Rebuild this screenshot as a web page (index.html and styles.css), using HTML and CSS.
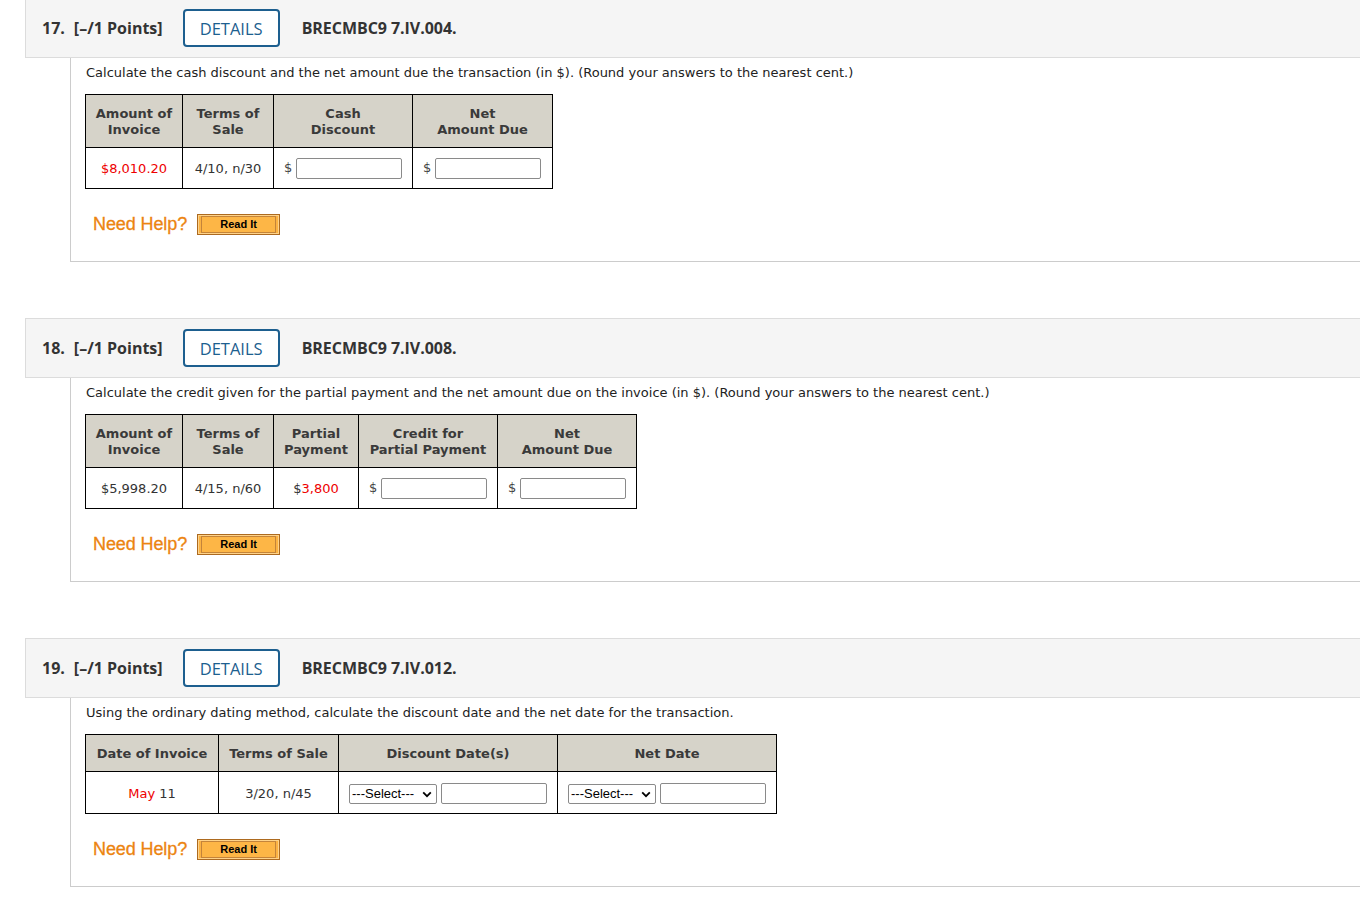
FILE: index.html
```html
<!DOCTYPE html>
<html lang="en">
<head>
<meta charset="utf-8">
<title>Questions</title>
<link rel="stylesheet" href="styles.css">
</head>
<body>
<div class="page">

  <div class="question">
    <div class="q-head">
      <span class="q-num">17.</span>
      <span class="q-pts">[–/1 Points]</span>
      <button class="details">DETAILS</button>
      <span class="q-code">BRECMBC9 7.IV.004.</span>
    </div>
    <div class="q-body">
      <p class="prompt">Calculate the cash discount and the net amount due the transaction (in $). (Round your answers to the nearest cent.)</p>
      <table class="grid t17">
        <thead>
          <tr>
            <th class="w97">Amount of<br>Invoice</th>
            <th class="w91">Terms of<br>Sale</th>
            <th class="w139">Cash<br>Discount</th>
            <th class="w140">Net<br>Amount Due</th>
          </tr>
        </thead>
        <tbody>
          <tr>
            <td><span class="red">$8,010.20</span></td>
            <td>4/10, n/30</td>
            <td class="ans"><span class="cur">$</span> <input class="box" type="text"></td>
            <td class="ans"><span class="cur">$</span> <input class="box" type="text"></td>
          </tr>
        </tbody>
      </table>
      <div class="help">
        <span class="need">Need Help?</span>
        <button class="readit"><span class="readit-in">Read It</span></button>
      </div>
    </div>
  </div>

  <div class="question">
    <div class="q-head">
      <span class="q-num">18.</span>
      <span class="q-pts">[–/1 Points]</span>
      <button class="details">DETAILS</button>
      <span class="q-code">BRECMBC9 7.IV.008.</span>
    </div>
    <div class="q-body">
      <p class="prompt">Calculate the credit given for the partial payment and the net amount due on the invoice (in $). (Round your answers to the nearest cent.)</p>
      <table class="grid t18">
        <thead>
          <tr>
            <th class="w97">Amount of<br>Invoice</th>
            <th class="w91">Terms of<br>Sale</th>
            <th class="w85">Partial<br>Payment</th>
            <th class="w139">Credit for<br>Partial Payment</th>
            <th class="w139">Net<br>Amount Due</th>
          </tr>
        </thead>
        <tbody>
          <tr>
            <td>$5,998.20</td>
            <td>4/15, n/60</td>
            <td>$<span class="red">3,800</span></td>
            <td class="ans"><span class="cur">$</span> <input class="box" type="text"></td>
            <td class="ans"><span class="cur">$</span> <input class="box" type="text"></td>
          </tr>
        </tbody>
      </table>
      <div class="help">
        <span class="need">Need Help?</span>
        <button class="readit"><span class="readit-in">Read It</span></button>
      </div>
    </div>
  </div>

  <div class="question">
    <div class="q-head">
      <span class="q-num">19.</span>
      <span class="q-pts">[–/1 Points]</span>
      <button class="details">DETAILS</button>
      <span class="q-code">BRECMBC9 7.IV.012.</span>
    </div>
    <div class="q-body">
      <p class="prompt">Using the ordinary dating method, calculate the discount date and the net date for the transaction.</p>
      <table class="grid t19">
        <thead>
          <tr>
            <th class="w133">Date of Invoice</th>
            <th class="w120">Terms of Sale</th>
            <th class="w219">Discount Date(s)</th>
            <th class="w219">Net Date</th>
          </tr>
        </thead>
        <tbody>
          <tr>
            <td><span class="red">May</span> 11</td>
            <td>3/20, n/45</td>
            <td class="ans">
              <span class="sel-wrap"><select class="sel"><option>---Select---</option></select><svg class="chev" width="10" height="7" viewBox="0 0 10 7"><path d="M1.2 1.4 L5 5.2 L8.8 1.4" fill="none" stroke="#000" stroke-width="1.8"/></svg></span>
              <input class="box" type="text">
            </td>
            <td class="ans">
              <span class="sel-wrap"><select class="sel"><option>---Select---</option></select><svg class="chev" width="10" height="7" viewBox="0 0 10 7"><path d="M1.2 1.4 L5 5.2 L8.8 1.4" fill="none" stroke="#000" stroke-width="1.8"/></svg></span>
              <input class="box" type="text">
            </td>
          </tr>
        </tbody>
      </table>
      <div class="help">
        <span class="need">Need Help?</span>
        <button class="readit"><span class="readit-in">Read It</span></button>
      </div>
    </div>
  </div>

</div>
</body>
</html>
```

FILE: styles.css
```css
* { box-sizing: border-box; }

html, body {
  margin: 0;
  padding: 0;
  background: #fff;
}

body {
  overflow-x: hidden;
  font-family: "DejaVu Sans", Verdana, sans-serif;
  color: #222;
}

.page {
  margin-top: -2px;
}

.question {
  margin-bottom: 56px;
}

.q-head {
  margin-left: 25px;
  margin-right: -6px;
  height: 60px;
  background: #f5f5f5;
  border: 1px solid #dcdcdc;
  display: flex;
  align-items: center;
  padding-left: 16px;
  font-family: "Open Sans", sans-serif;
  font-size: 16px;
  color: #333;
}

.q-num {
  font-weight: 700;
  margin-right: 9px;
}

.q-pts {
  font-weight: 700;
  margin-right: 20px;
}

.details {
  width: 97px;
  height: 38px;
  padding: 0;
  border: 2px solid #1d5f8f;
  border-radius: 4px;
  background: #fff;
  color: #1d5f8f;
  font-family: "Open Sans", sans-serif;
  font-size: 16.5px;
  margin-right: 22px;
}

.q-code {
  font-weight: 700;
  letter-spacing: -0.05px;
}

.q-body {
  margin-left: 70px;
  border-left: 1px solid #cccccc;
  border-bottom: 1px solid #cccccc;
  padding: 7px 0 26px 15px;
}

.prompt {
  margin: 0;
  font-size: 13px;
  line-height: 16px;
  color: #222;
}

.grid {
  margin-top: 13px;
  margin-left: -1px;
  border-collapse: collapse;
  table-layout: fixed;
  font-size: 13px;
  line-height: 16px;
}

.t17 { width: 468px; }
.t18 { width: 552px; }
.t19 { width: 692px; }

.grid th {
  background: #d6d3c9;
  border: 1px solid #000;
  padding: 11px 4px 9px;
  font-weight: 700;
  color: #3a3a3a;
  text-align: center;
}

.grid td {
  border: 1px solid #000;
  padding: 10px 10px 9px;
  text-align: center;
  color: #333;
  white-space: nowrap;
}

.t19 td {
  padding: 11px 10px 9px;
}

.grid td.ans {
  text-align: left;
}

.w85 { width: 85px; }
.w91 { width: 91px; }
.w97 { width: 97px; }
.w120 { width: 120px; }
.w133 { width: 133px; }
.w139 { width: 139px; }
.w140 { width: 140px; }
.w219 { width: 219px; }

.red { color: #ee0000; }

.cur { color: #444; }

.box {
  width: 106px;
  height: 21px;
  border: 1px solid #8a8a8a;
  border-radius: 2px;
  background: #fff;
  vertical-align: middle;
  margin: 0;
  padding: 0 3px;
}

.sel-wrap {
  position: relative;
  display: inline-block;
  vertical-align: middle;
  margin-right: 0;
}

.sel {
  appearance: none;
  -webkit-appearance: none;
  width: 88px;
  height: 20px;
  border: 1px solid #8a8a8a;
  border-radius: 2px;
  background: #fff;
  font-family: "Liberation Sans", Arial, sans-serif;
  font-size: 13px;
  color: #000;
  padding: 0 0 0 2px;
  margin: 0;
  display: block;
}

.chev {
  position: absolute;
  right: 5px;
  top: 7px;
}

.help {
  margin-top: 25px;
  display: flex;
  align-items: center;
  padding-left: 7px;
}

.need {
  font-family: "Liberation Sans", Arial, sans-serif;
  font-size: 18px;
  letter-spacing: -0.1px;
  color: #ec8410;
  margin-right: 10px;
  -webkit-text-stroke: 0.3px #ec8410;
}

.readit {
  width: 83px;
  height: 21px;
  padding: 1px 3px;
  border: 1px solid #ad6a1f;
  background: #fbb243;
  box-shadow: inset 0 0 0 1px #fed38a;
  cursor: pointer;
}

.readit-in {
  display: block;
  height: 100%;
  border: 1px solid #c4843a;
  background: #fdb646;
  font-family: "Liberation Sans", Arial, sans-serif;
  font-weight: 700;
  font-size: 11px;
  line-height: 15px;
  color: #000;
}
```
